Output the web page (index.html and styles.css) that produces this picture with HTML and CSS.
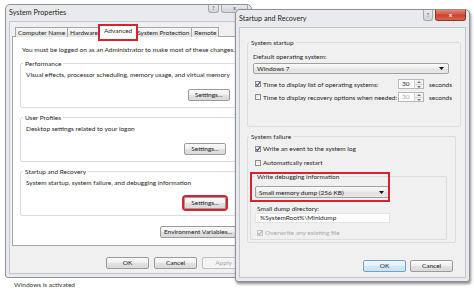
FILE: index.html
```html
<!DOCTYPE html>
<html lang="en">

<head>
  <meta charset="utf-8">
  <title>System Properties - Startup and Recovery</title>
  <link rel="stylesheet" href="styles.css">
</head>

<body>
  <!-- System Properties (inactive, behind) -->
  <div class="window sysprops">
    <div class="titlebar">
      <span class="title">System Properties</span>
      <div class="caption">
        <span class="cap-btn help">?</span>
        <span class="cap-btn close">x</span>
      </div>
    </div>
    <div class="client">
      <div class="tabs">
        <span class="tab">Computer Name</span>
        <span class="tab">Hardware</span>
        <span class="tab active">Advanced</span>
        <span class="tab">System Protection</span>
        <span class="tab">Remote</span>
      </div>
      <div class="tab-panel">
        <p class="note">You must be logged on as an Administrator to make most of these changes.</p>
        <fieldset class="group">
          <legend>Performance</legend>
          <p class="desc">Visual effects, processor scheduling, memory usage, and virtual memory</p>
          <div class="group-actions"><button class="btn">Settings...</button></div>
        </fieldset>
        <fieldset class="group">
          <legend>User Profiles</legend>
          <p class="desc">Desktop settings related to your logon</p>
          <div class="group-actions"><button class="btn">Settings...</button></div>
        </fieldset>
        <fieldset class="group">
          <legend>Startup and Recovery</legend>
          <p class="desc">System startup, system failure, and debugging information</p>
          <div class="group-actions"><button class="btn marked">Settings...</button></div>
        </fieldset>
        <div class="panel-actions"><button class="btn env">Environment Variables...</button></div>
      </div>
      <div class="dialog-buttons">
        <button class="btn">OK</button>
        <button class="btn">Cancel</button>
        <button class="btn" disabled>Apply</button>
      </div>
    </div>
  </div>

  <!-- Startup and Recovery (active, on top) -->
  <div class="window recovery">
    <div class="titlebar">
      <span class="title">Startup and Recovery</span>
      <div class="caption">
        <span class="cap-btn help">?</span>
        <span class="cap-btn close red">x</span>
      </div>
    </div>
    <div class="client">
      <fieldset class="group sr-group startup">
        <legend>System startup</legend>
        <p class="line">Default operating system:</p>
        <div class="combo full">
          <span>Windows 7</span>
          <svg width="5" height="3" viewBox="0 0 5 3"><path d="M0 0H5L2.5 3Z" fill="#111"/></svg>
        </div>
        <div class="check-row timer">
          <span class="check on"><svg width="6" height="6" viewBox="0 0 6 6"><path d="M1 3.2L2.4 4.6L5 1.2" fill="none" stroke="#3a4e8c" stroke-width="1.1"/></svg></span>
          <span class="check-label">Time to display list of operating systems:</span>
          <span class="spin"><span class="spin-val">30</span><span class="spin-arrows"><i class="up"></i><i class="down"></i></span></span>
          <span class="unit">seconds</span>
        </div>
        <div class="check-row timer second">
          <span class="check"></span>
          <span class="check-label">Time to display recovery options when needed:</span>
          <span class="spin off"><span class="spin-val">30</span><span class="spin-arrows"><i class="up"></i><i class="down"></i></span></span>
          <span class="unit">seconds</span>
        </div>
      </fieldset>

      <fieldset class="group sr-group failure">
        <legend>System failure</legend>
        <div class="check-row first">
          <span class="check on"><svg width="6" height="6" viewBox="0 0 6 6"><path d="M1 3.2L2.4 4.6L5 1.2" fill="none" stroke="#3a4e8c" stroke-width="1.1"/></svg></span>
          <span class="check-label">Write an event to the system log</span>
        </div>
        <div class="check-row">
          <span class="check"></span>
          <span class="check-label">Automatically restart</span>
        </div>
        <fieldset class="group debug">
          <legend>Write debugging information</legend>
          <div class="combo">
            <span>Small memory dump (256 KB)</span>
            <svg width="5" height="3" viewBox="0 0 5 3"><path d="M0 0H5L2.5 3Z" fill="#111"/></svg>
          </div>
          <p class="line small">Small dump directory:</p>
          <div class="textbox">%SystemRoot%\Minidump</div>
          <div class="check-row disabled">
            <span class="check on"><svg width="6" height="6" viewBox="0 0 6 6"><path d="M1 3.2L2.4 4.6L5 1.2" fill="none" stroke="#b4b4b4" stroke-width="1.1"/></svg></span>
            <span class="check-label">Overwrite any existing file</span>
          </div>
        </fieldset>
      </fieldset>

      <div class="dialog-buttons">
        <button class="btn default">OK</button>
        <button class="btn">Cancel</button>
      </div>
    </div>
    <span class="callout"></span>
  </div>

  <p class="activated">Windows is activated</p>
</body>

</html>
```

FILE: styles.css
```css
* {
  margin: 0;
  padding: 0;
  box-sizing: border-box;
}

body {
  position: relative;
  width: 474px;
  height: 289px;
  overflow: hidden;
  background: #fff;
  font-family: Lato, 'Noto Sans', sans-serif;
  font-size: 6.5px;
  color: #262626;
}

/* Windows on the desktop */
.window {
  position: absolute;
  display: flex;
  flex-direction: column;
  background: #e8eaed;
  border: 1px solid #8d9095;
  border-radius: 5px 5px 3px 3px;
  padding: 0 3px 3px;
}

.sysprops {
  left: 5px;
  top: 4px;
  width: 247px;
  height: 274px;
}

.recovery {
  left: 235px;
  top: 9px;
  width: 235px;
  height: 273px;
  box-shadow: 1px 2px 3px rgba(0, 0, 0, 0.45);
}

.titlebar {
  display: flex;
  height: 16px;
}

.recovery .titlebar {
  height: 17px;
}

.title {
  font-size: 7.2px;
  line-height: 16px;
  color: #1e1e1e;
}

.recovery .title {
  line-height: 17px;
}

.caption {
  display: flex;
  gap: 2px;
  margin-left: auto;
}

.cap-btn {
  height: 8px;
  border: 1px solid #a5a8ad;
  border-top: none;
  border-radius: 0 0 3px 3px;
  background: linear-gradient(#e9ebee, #cfd2d6);
  color: #6b6e73;
  font-size: 5px;
  line-height: 7px;
  text-align: center;
  font-weight: bold;
}

.cap-btn.help {
  width: 11px;
}

.cap-btn.close {
  width: 27px;
}

.recovery .cap-btn {
  height: 11px;
  line-height: 10px;
}

.recovery .cap-btn.help {
  width: 10px;
}

.recovery .cap-btn.close {
  width: 31px;
}

.cap-btn.red {
  background: linear-gradient(#e5897c, #c9452f 55%, #d9674f);
  border-color: #8e3426;
  color: #fff;
  font-size: 6px;
}

.client {
  flex: 1;
  display: flex;
  flex-direction: column;
  background: #f0f0f0;
  border: 1px solid #c2c5ca;
  padding: 0 1px;
}

/* Tabs */
.tabs {
  display: flex;
  align-items: flex-end;
  padding: 2px 0 0 4px;
  position: relative;
  z-index: 1;
}

.tab {
  height: 10px;
  padding: 0 2px;
  border: 1px solid #a4a6ab;
  border-bottom: none;
  background: linear-gradient(#f7f7f7, #e4e4e4);
  line-height: 9px;
  margin-bottom: -1px;
}

.tab + .tab {
  margin-left: -1px;
}

.tab.active {
  position: relative;
  height: 13px;
  padding: 0 4px;
  margin: 0 -2px -1px;
  background: #fff;
  z-index: 2;
  line-height: 11px;
}

/* red highlight drawn over the active tab */
.tab.active::after {
  content: "";
  position: absolute;
  left: -2px;
  right: -2px;
  top: -1px;
  bottom: -4px;
  border: 2px solid #d6242f;
}

.tab-panel {
  background: #fff;
  border: 1px solid #a4a6ab;
  margin: 0 1px;
  padding: 8px 8px 7px 7px;
}

.note {
  line-height: 9px;
  padding-left: 2px;
  white-space: nowrap;
}

/* Group boxes */
.group {
  border: 1px solid #dcdcdc;
  border-radius: 2px;
  padding: 0 9px 6px 5px;
  margin-top: 5px;
}

.group legend {
  margin-left: -3px;
  padding: 0 2px;
  line-height: 9px;
}

.desc {
  line-height: 9px;
  margin-top: 2px;
  white-space: nowrap;
}

.group-actions,
.panel-actions {
  display: flex;
  justify-content: flex-end;
  margin-top: 10px;
}

/* Buttons */
.btn {
  font: inherit;
  width: 42px;
  height: 12px;
  padding: 0;
  border: 1px solid #9a9b9c;
  border-radius: 2px;
  background: linear-gradient(#fafafa, #efefef 50%, #e2e2e2 51%, #dadada);
  color: #222;
  line-height: 10px;
}

.btn.env {
  width: 76px;
}

.btn.marked {
  outline: 2px solid #d6242f;
  outline-offset: 0;
}

.btn.default {
  border-color: #6ea3cf;
  background: linear-gradient(#f1f8fd, #e3f0fa 50%, #d2e7f6 51%, #c9e2f4);
}

.btn:disabled {
  color: #a6a6a6;
  border-color: #c0c0c0;
  background: #f4f4f4;
}

.dialog-buttons {
  display: flex;
  justify-content: flex-end;
  gap: 5px;
  margin-top: 11px;
  padding-right: 1px;
}

.sysprops .dialog-buttons .btn {
  width: 43px;
}

/* Startup and Recovery */
.sr-group {
  margin: 10px 8px 0 6px;
  padding: 0 8px 2px 5px;
}

.sr-group legend {
  margin-left: -4px;
}

.startup {
  padding-bottom: 24px;
}

.failure {
  margin-top: 5px;
}

.line {
  line-height: 9px;
  margin-top: 5px;
}

.line.small {
  line-height: 8px;
  margin-top: 7px;
  padding-left: 2px;
}

.combo {
  display: flex;
  align-items: center;
  justify-content: space-between;
  height: 12px;
  padding: 0 4px 0 3px;
  border: 1px solid #a0a0a0;
  border-radius: 2px;
  background: linear-gradient(#fbfbfb, #ececec 50%, #e0e0e0 51%, #e8e8e8);
  margin-top: 5px;
  width: 134px;
}

.combo.full {
  width: 196px;
  height: 11px;
  margin-top: 2px;
}

.check-row {
  display: flex;
  align-items: center;
  height: 9px;
  margin-top: 5px;
  padding-left: 2px;
  white-space: nowrap;
}

.check-row.first {
  margin-top: 3px;
}

.check-row.timer {
  height: 10px;
  margin-top: 5px;
}

.check-row.timer.second {
  margin-top: 3px;
}

.check {
  display: flex;
  align-items: center;
  justify-content: center;
  flex: none;
  width: 6px;
  height: 6px;
  border: 1px solid #8f8f8f;
  background: linear-gradient(#e6e6e6, #fdfdfd);
}

.check svg {
  flex: none;
}

.check-label {
  margin-left: 2px;
  line-height: 9px;
}

.timer .check-label {
  flex: none;
  width: 135px;
}

.spin {
  display: flex;
  flex: none;
  width: 26px;
  height: 10px;
  border: 1px solid #b5b8be;
  background: #fff;
}

.spin-val {
  flex: 1;
  padding-left: 3px;
  line-height: 8px;
}

.spin.off .spin-val {
  color: #a8a8a8;
}

.spin-arrows {
  display: flex;
  flex-direction: column;
  width: 9px;
  border-left: 1px solid #d4d4d4;
}

.spin-arrows i {
  flex: 1;
  position: relative;
  background: #f2f2f2;
}

.spin-arrows i + i {
  border-top: 1px solid #d4d4d4;
}

.spin-arrows i::after {
  content: "";
  position: absolute;
  left: 2px;
  top: 1px;
  border-left: 2px solid transparent;
  border-right: 2px solid transparent;
}

.spin-arrows .up::after {
  border-bottom: 2px solid #777;
}

.spin-arrows .down::after {
  border-top: 2px solid #777;
}

.unit {
  margin-left: 5px;
  line-height: 9px;
}

.debug {
  margin: 5px 0 0 -3px;
  padding: 0 0 2px 4px;
}

.debug legend {
  margin-left: 0;
}

.textbox {
  width: 135px;
  height: 10px;
  border: 1px solid #e2e3e6;
  background: #fff;
  padding-left: 4px;
  line-height: 8px;
}

.check-row.disabled {
  color: #a9a9a9;
}

.check-row.disabled .check {
  border-color: #c6c6c6;
  background: #f4f4f4;
}

.recovery .dialog-buttons {
  gap: 4px;
  margin-top: 17px;
  padding-right: 11px;
}

.recovery .dialog-buttons .btn {
  width: 43px;
}

/* red highlight around the debugging dropdown */
.callout {
  position: absolute;
  left: 14px;
  top: 162px;
  width: 140px;
  height: 30px;
  border: 2px solid #d6242f;
}

.activated {
  position: absolute;
  left: 14px;
  top: 281px;
  line-height: 8px;
  color: #333;
}
```
